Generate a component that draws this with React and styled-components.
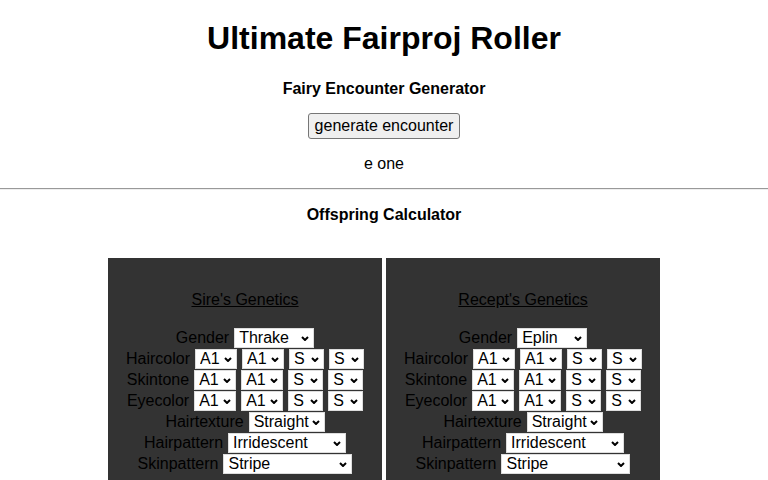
import React from 'react';
import styled, { createGlobalStyle } from 'styled-components';

const Global = createGlobalStyle`
  body {
    margin: 0;
    padding: 0 8px;
    background: #fff;
    color: #000;
    font-family: "Liberation Sans", Arial, sans-serif;
    font-size: 16px;
  }
`;

const Page = styled.div`
  text-align: center;
  padding-top: 20px;
`;

const Title = styled.h1`
  margin: 0;
  font-size: 32px;
  line-height: 37px;
  font-weight: bold;
`;

const SubTitle = styled.h4`
  margin: ${props => props.top || 22}px 0 0;
  font-size: 16px;
  line-height: 18px;
  font-weight: bold;
`;

const RollButton = styled.button`
  display: block;
  margin: 15px auto 0;
  height: 26px;
  padding: 1px 6px;
  font-family: "Liberation Sans", Arial, sans-serif;
  font-size: 16px;
  color: #000;
  background: #efefef;
  border: 1px solid #767676;
  border-radius: 3px;
`;

const Result = styled.p`
  margin: 16px 0 0;
  line-height: 18px;
`;

const Rule = styled.div`
  margin: 15px -8px 0;
  height: 0;
  border-top: 1px solid #999;
  border-bottom: 1px solid #eee;
`;

const Panels = styled.div`
  display: flex;
  justify-content: center;
  gap: 4px;
  margin-top: 34px;
`;

const Panel = styled.div`
  width: 274px;
  padding: 33px 0 40px;
  background: #333;
  display: flex;
  flex-direction: column;
  align-items: center;
`;

const PanelHead = styled.div`
  line-height: 18px;
  text-decoration: underline;
  margin-bottom: 18px;
`;

const Row = styled.div`
  display: flex;
  justify-content: center;
  align-items: center;
  gap: 5px;
  height: 21px;
`;

const Label = styled.span`
  line-height: 18px;
`;

const PickWrap = styled.span`
  position: relative;
  display: inline-flex;
  width: ${props => props.w}px;
  height: 20px;
`;

const Pick = styled.select`
  appearance: none;
  -webkit-appearance: none;
  width: 100%;
  height: 20px;
  margin: 0;
  padding: 0 14px 0 4px;
  font-family: "Liberation Sans", Arial, sans-serif;
  font-size: 16px;
  line-height: 18px;
  color: #000;
  background-color: #fff;
  border: 1px solid #ddd;
  border-radius: 0;
  outline: none;
`;

const Chevron = styled.svg`
  position: absolute;
  right: 5px;
  top: 8px;
  width: 8px;
  height: 5px;
  pointer-events: none;
`;

const Select = ({ w, options }) => (
  <PickWrap w={w}>
    <Pick>
      {options.map(o => <option key={o}>{o}</option>)}
    </Pick>
    <Chevron viewBox="0 0 8 5">
      <path d="M1 1 L4 4 L7 1" fill="none" stroke="#000" strokeWidth="2" />
    </Chevron>
  </PickWrap>
);

const Genes = ({ label }) => (
  <Row>
    <Label>{label}</Label>
    <Select w={42} options={['A1', 'A2']} />
    <Select w={42} options={['A1', 'A2']} />
    <Select w={35} options={['S', 'R']} />
    <Select w={35} options={['S', 'R']} />
  </Row>
);

const Parent = ({ title, gender, genderWidth }) => (
  <Panel>
    <PanelHead>{title}</PanelHead>
    <Row>
      <Label>Gender</Label>
      <Select w={genderWidth} options={[gender]} />
    </Row>
    <Genes label="Haircolor" />
    <Genes label="Skintone" />
    <Genes label="Eyecolor" />
    <Row>
      <Label>Hairtexture</Label>
      <Select w={76} options={['Straight', 'Curly']} />
    </Row>
    <Row>
      <Label>Hairpattern</Label>
      <Select w={118} options={['Irridescent']} />
    </Row>
    <Row>
      <Label>Skinpattern</Label>
      <Select w={129} options={['Stripe']} />
    </Row>
  </Panel>
);

export default function App() {
  return (
    <Page>
      <Global />
      <Title>Ultimate Fairproj Roller</Title>
      <SubTitle top={23}>Fairy Encounter Generator</SubTitle>
      <RollButton>generate encounter</RollButton>
      <Result>e one</Result>
      <Rule />
      <SubTitle top={16}>Offspring Calculator</SubTitle>
      <Panels>
        <Parent title="Sire's Genetics" gender="Thrake" genderWidth={80} />
        <Parent title="Recept's Genetics" gender="Eplin" genderWidth={70} />
      </Panels>
    </Page>
  );
}
